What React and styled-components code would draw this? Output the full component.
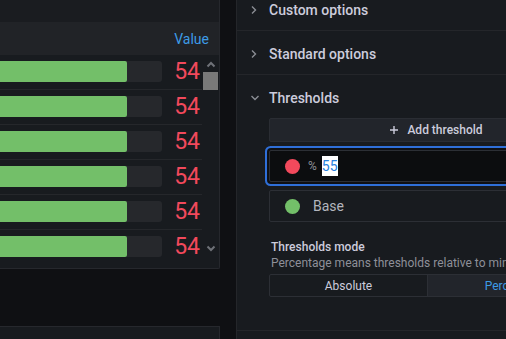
import React from 'react';
import styled, { createGlobalStyle } from 'styled-components';

const GlobalStyle = createGlobalStyle`
  body {
    margin: 0;
    background: #0f1013;
    font-family: Roboto, "Liberation Sans", sans-serif;
    overflow: hidden;
  }
`;

const rows = [54, 54, 54, 54, 54, 54];

function ChevronRight() {
  return (
    <svg width="8" height="10" viewBox="0 0 8 10">
      <polyline points="2,1.5 5.5,5 2,8.5" fill="none" stroke="#8a8d94" strokeWidth="1.4" />
    </svg>
  );
}

function ChevronDown() {
  return (
    <svg width="10" height="8" viewBox="0 0 10 8">
      <polyline points="1.5,2 5,5.5 8.5,2" fill="none" stroke="#8a8d94" strokeWidth="1.4" />
    </svg>
  );
}

function ScrollArrow({ up }) {
  return (
    <svg width="10" height="7" viewBox="0 0 10 7">
      <polyline
        points={up ? '1.5,5.5 5,2 8.5,5.5' : '1.5,1.5 5,5 8.5,1.5'}
        fill="none"
        stroke="#6f7278"
        strokeWidth="2"
      />
    </svg>
  );
}

function Plus() {
  return (
    <svg width="10" height="10" viewBox="0 0 10 10">
      <path d="M5 1v8M1 5h8" stroke="#ccccdc" strokeWidth="1.4" />
    </svg>
  );
}

function App() {
  return (
    <>
      <GlobalStyle />
      <Page>
        <LeftCol>
          <TablePanel>
            <PanelTop />
            <HeaderRow>
              <HeaderCell>Value</HeaderCell>
            </HeaderRow>
            <TableBody>
              <Rows>
                {rows.map((v, i) => (
                  <Row key={i} $last={i === rows.length - 1}>
                    <BarTrack>
                      <BarFill $pct={79.7} />
                    </BarTrack>
                    <Value>{v}</Value>
                  </Row>
                ))}
              </Rows>
              <Scrollbar>
                <ScrollArrow up />
                <Thumb />
                <ScrollDown>
                  <ScrollArrow />
                </ScrollDown>
              </Scrollbar>
            </TableBody>
          </TablePanel>
          <LowerPanel />
        </LeftCol>

        <OptionsPane>
          <Section $first>
            <SectionHeader>
              <Caret><ChevronRight /></Caret>
              Custom options
            </SectionHeader>
          </Section>
          <Section>
            <SectionHeader>
              <Caret><ChevronRight /></Caret>
              Standard options
            </SectionHeader>
          </Section>
          <Section>
            <SectionHeader>
              <Caret><ChevronDown /></Caret>
              Thresholds
            </SectionHeader>
            <SectionBody>
              <AddButton>
                <Plus />
                Add threshold
              </AddButton>
              <ThresholdInput $focused>
                <Dot $color="#f2495c" />
                <Unit>%</Unit>
                <Selected>55</Selected>
              </ThresholdInput>
              <ThresholdInput>
                <Dot $color="#73bf69" />
                <BaseLabel>Base</BaseLabel>
              </ThresholdInput>
              <FieldLabel>Thresholds mode</FieldLabel>
              <FieldDesc>Percentage means thresholds relative to min &amp; max</FieldDesc>
              <RadioGroup>
                <RadioOption $width="158px">Absolute</RadioOption>
                <RadioOption $active>Percentage</RadioOption>
              </RadioGroup>
            </SectionBody>
          </Section>
        </OptionsPane>
      </Page>
    </>
  );
}

export default App;

const Page = styled.div`
  display: flex;
  gap: 16px;
  width: 506px;
  height: 339px;
  overflow: hidden;
`;

const LeftCol = styled.div`
  display: flex;
  flex-direction: column;
  width: 220px;
  flex-shrink: 0;
`;

const TablePanel = styled.div`
  height: 269px;
  box-sizing: border-box;
  background: #181b1f;
  border-right: 1px solid #26282d;
  border-bottom: 1px solid #26282d;
  border-bottom-right-radius: 2px;
  display: flex;
  flex-direction: column;
  overflow: hidden;
`;

const PanelTop = styled.div`
  height: 22px;
  background: #1a1c20;
`;

const HeaderRow = styled.div`
  height: 33px;
  background: #212327;
  display: flex;
  align-items: center;
  justify-content: flex-end;
  padding-right: 10px;
`;

const HeaderCell = styled.span`
  color: #3d9be6;
  font-size: 14px;
  line-height: 16px;
`;

const TableBody = styled.div`
  display: flex;
  flex: 1;
`;

const Rows = styled.div`
  width: 202px;
  display: flex;
  flex-direction: column;
`;

const Row = styled.div`
  height: 35px;
  box-sizing: border-box;
  padding-top: 6px;
  display: flex;
  align-items: flex-start;
  border-bottom: ${(p) => (p.$last ? 'none' : '1px solid #25272b')};
`;

const BarTrack = styled.div`
  margin-left: -10px;
  width: 172px;
  height: 21px;
  flex-shrink: 0;
  background: #26282c;
  border-radius: 3px;
  overflow: hidden;
`;

const BarFill = styled.div`
  width: ${(p) => p.$pct}%;
  height: 100%;
  background: #73bf69;
  border-radius: 0 2px 2px 0;
`;

const Value = styled.div`
  flex: 1;
  text-align: right;
  padding-right: 2px;
  font-size: 23px;
  line-height: 21px;
  color: #f2495c;
`;

const Scrollbar = styled.div`
  width: 17px;
  display: flex;
  flex-direction: column;
  align-items: center;
  padding-top: 6px;
`;

const Thumb = styled.div`
  width: 15px;
  height: 18px;
  margin-top: 4px;
  background: #797979;
`;

const ScrollDown = styled.div`
  margin-top: 147px;
`;

const LowerPanel = styled.div`
  margin-top: 57px;
  flex: 1;
  background: #181b1f;
  border-top: 1px solid #26282d;
  border-right: 1px solid #26282d;
`;

const OptionsPane = styled.div`
  flex: 1;
  background: #181b1f;
  border-left: 1px solid #24262a;
  overflow: hidden;
  display: flex;
  flex-direction: column;
`;

const Section = styled.div`
  border-bottom: 1px solid #24262a;
  margin-top: ${(p) => (p.$first ? '-13px' : '0')};
  flex-shrink: 0;
`;

const SectionHeader = styled.div`
  height: 43px;
  box-sizing: border-box;
  padding: 15px 0 12px 13px;
  display: flex;
  align-items: center;
  font-size: 14px;
  font-weight: 500;
  line-height: 16px;
  color: #ccccdc;
`;

const Caret = styled.span`
  width: 19px;
  display: flex;
  align-items: center;
`;

const SectionBody = styled.div`
  padding: 0 0 33px 32px;
  width: 334px;
`;

const AddButton = styled.div`
  height: 24px;
  box-sizing: border-box;
  background: #22252b;
  border: 1px solid #2a2d33;
  border-radius: 2px;
  display: flex;
  align-items: center;
  justify-content: center;
  gap: 8px;
  font-size: 12px;
  font-weight: 500;
  color: #ccccdc;
`;

const ThresholdInput = styled.div`
  margin-top: 8px;
  height: 32px;
  box-sizing: border-box;
  border: 1px solid #2c2f35;
  border-radius: 2px;
  background: ${(p) => (p.$focused ? '#0c0d0f' : '#181b1f')};
  box-shadow: ${(p) => (p.$focused ? '0 0 0 2px #0f1013, 0 0 0 4px #2f6fd8' : 'none')};
  display: flex;
  align-items: center;
  padding-left: 15px;
`;

const Dot = styled.span`
  width: 15px;
  height: 15px;
  border-radius: 50%;
  background: ${(p) => p.$color};
`;

const Unit = styled.span`
  margin-left: 8px;
  font-size: 12px;
  color: #8e9099;
`;

const Selected = styled.span`
  margin-left: 5px;
  padding: 2px 0;
  font-size: 14px;
  line-height: 16px;
  background: #ffffff;
  color: #2a82de;
`;

const BaseLabel = styled.span`
  margin-left: 13px;
  font-size: 14px;
  color: #b4b6be;
`;

const FieldLabel = styled.div`
  margin-top: 17px;
  padding-left: 2px;
  font-size: 12px;
  font-weight: 500;
  line-height: 16px;
  color: #ccccdc;
`;

const FieldDesc = styled.div`
  padding-left: 2px;
  font-size: 12px;
  line-height: 16px;
  color: #8e9099;
  white-space: nowrap;
`;

const RadioGroup = styled.div`
  margin-top: 3px;
  height: 23px;
  box-sizing: border-box;
  display: flex;
  border: 1px solid #2c2f35;
  border-radius: 2px;
`;

const RadioOption = styled.div`
  width: ${(p) => p.$width || 'auto'};
  flex: ${(p) => (p.$width ? '0 0 auto' : '1')};
  box-sizing: border-box;
  display: flex;
  align-items: center;
  justify-content: center;
  font-size: 12px;
  font-weight: 400;
  background: ${(p) => (p.$active ? '#22252b' : 'transparent')};
  color: ${(p) => (p.$active ? '#3d9be6' : '#ccccdc')};
  border-right: ${(p) => (p.$active ? 'none' : '1px solid #2c2f35')};
`;
